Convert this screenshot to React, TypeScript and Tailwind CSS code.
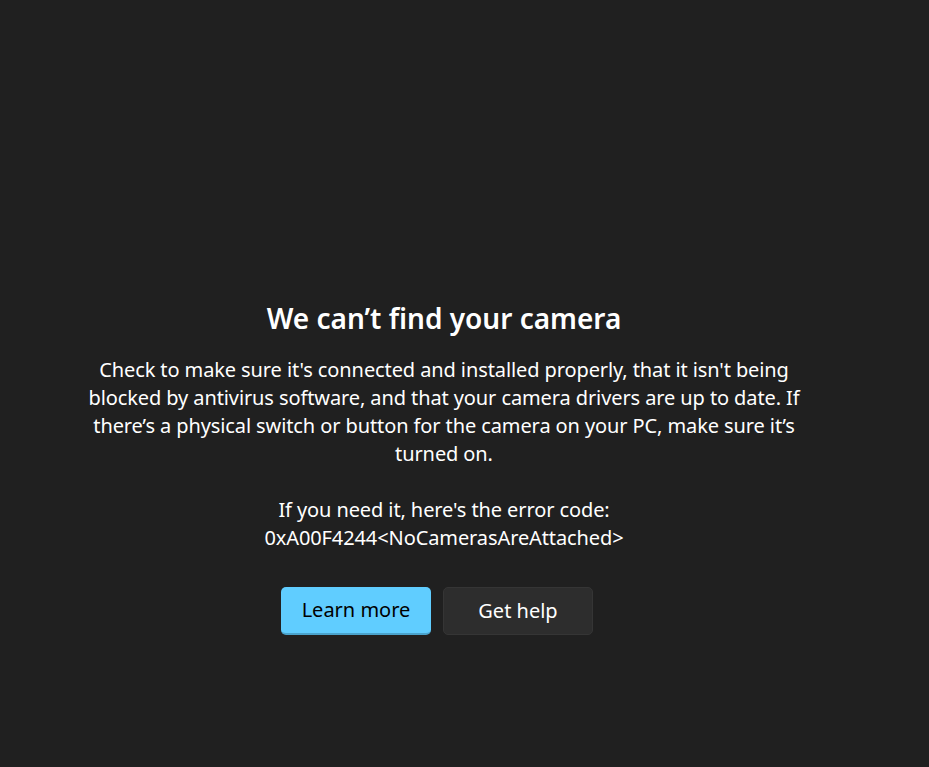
export default function App() {
    return (
        <div className="min-h-screen w-full bg-[#202020] text-white font-['Noto_Sans',sans-serif]">
            <div className="flex flex-col items-center pt-[298px] pr-[41px]">
                <h1 className="text-[28px] font-semibold leading-[40px]">
                    We can’t find your camera
                </h1>

                <p className="mt-[18px] text-center text-[20px] leading-[28px] tracking-[-0.1px]">
                    Check to make sure it's connected and installed properly, that it isn't being
                    <br />
                    blocked by antivirus software, and that your camera drivers are up to date. If
                    <br />
                    there’s a physical switch or button for the camera on your PC, make sure it’s
                    <br />
                    turned on.
                </p>

                <p className="mt-[28px] text-center text-[20px] leading-[28px] tracking-[-0.1px]">
                    If you need it, here's the error code:
                    <br />
                    0xA00F4244&lt;NoCamerasAreAttached&gt;
                </p>

                {/* Actions */}
                <div className="mt-[35px] flex gap-3 mr-[14px]">
                    <button className="w-[150px] h-[48px] rounded-[5px] bg-[#60cdff] border-b-2 border-[#4aa3cc] text-black text-[20px]">
                        Learn more
                    </button>
                    <button className="w-[150px] h-[48px] rounded-[5px] bg-[#2d2d2d] border border-[#353535] text-white text-[20px]">
                        Get help
                    </button>
                </div>
            </div>
        </div>
    );
}
